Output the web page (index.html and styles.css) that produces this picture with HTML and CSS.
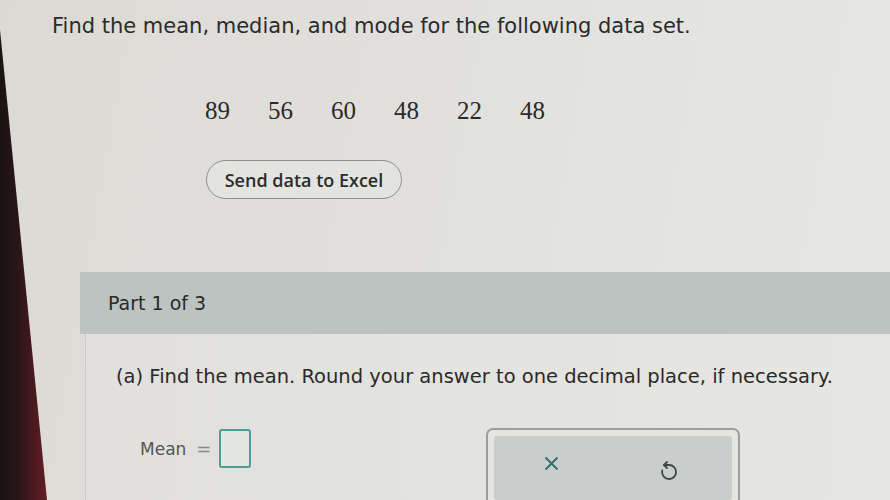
FILE: index.html
```html
<!DOCTYPE html>
<html>
<head>
<meta charset="utf-8">
<link rel="stylesheet" href="styles.css">
</head>
<body>
<div class="bezel"></div>
<main class="page">
  <h1 class="title">Find the mean, median, and mode for the following data set.</h1>
  <div class="data">
    <span>89</span><span>56</span><span>60</span><span>48</span><span>22</span><span>48</span>
  </div>
  <div class="excel-row">
    <button class="excel">Send data to Excel</button>
  </div>
  <section class="part">
    <div class="part-head">Part 1 of 3</div>
    <div class="part-body">
      <p class="question">(a) Find the mean. Round your answer to one decimal place, if necessary.</p>
      <div class="answer-row">
        <div class="mean">
          <span class="mean-label">Mean</span>
          <span class="eq">=</span>
          <span class="input"></span>
        </div>
        <div class="tools">
          <div class="tools-inner">
            <svg class="icon-x" width="15" height="15" viewBox="0 0 15 15"><path d="M1.5 1.5 L13.5 13.5 M13.5 1.5 L1.5 13.5" stroke="#336f66" stroke-width="1.8" fill="none"/></svg>
            <svg class="icon-undo" width="18" height="21" viewBox="0 0 18 21"><path d="M4 5 H9 A7 7 0 1 1 2.2 10.5" stroke="#3a4a47" stroke-width="1.8" fill="none" stroke-linecap="round"/><path d="M7 2 L4 5 L7 8" stroke="#3a4a47" stroke-width="1.8" fill="none" stroke-linecap="round" stroke-linejoin="round"/></svg>
          </div>
        </div>
      </div>
    </div>
  </section>
</main>
</body>
</html>
```

FILE: styles.css
```css
html, body {
  margin: 0;
  padding: 0;
  width: 890px;
  height: 500px;
  overflow: hidden;
}
body {
  position: relative;
  background: linear-gradient(100deg, #dcdad5 0%, #e1e0dc 45%, #e7e8e6 100%);
  font-family: "DejaVu Sans", Verdana, sans-serif;
  color: #2a2a2a;
}
.bezel {
  position: absolute;
  left: 0;
  top: 0;
  width: 60px;
  height: 500px;
  background: linear-gradient(90deg, #1a1414 0%, #2a1518 30%, #5a1c22 70%, #6a2228 100%);
  clip-path: polygon(0 30px, 47px 500px, 0 500px);
}
.page {
  padding: 14px 0 0 52px;
}
.title {
  margin: 0;
  font-size: 21px;
  font-weight: normal;
  line-height: 24px;
  color: #2b2b2b;
}
.data {
  display: flex;
  gap: 38px;
  margin: 58px 0 0 153px;
  font-family: "Liberation Serif", "Times New Roman", serif;
  font-size: 25px;
  line-height: 30px;
  color: #2a2a2a;
}
.excel-row {
  display: flex;
  margin: 34px 0 0 154px;
}
.excel {
  width: 196px;
  height: 39px;
  border: 1.5px solid #8e908d;
  border-radius: 20px;
  background: #e3e3df;
  font-family: "Open Sans", sans-serif;
  font-size: 18px;
  font-weight: 600;
  color: #2c2c2c;
  padding: 0;
}
.part {
  margin: 73px 0 0 28px;
}
.part-head {
  height: 62px;
  background: #bcc3c0;
  display: flex;
  align-items: center;
  padding-left: 28px;
  font-size: 19px;
  color: #2a2a2a;
  box-sizing: border-box;
}
.part-body {
  margin-left: 5px;
  border-left: 1px solid #c9c9c5;
  background: linear-gradient(90deg, #e1e0dc, #e6e6e3);
  height: 166px;
  padding-left: 30px;
  box-sizing: border-box;
}
.question {
  margin: 0;
  padding-top: 31px;
  font-size: 19.5px;
  line-height: 24px;
  color: #2a2a2a;
}
.answer-row {
  display: flex;
  align-items: flex-start;
  margin-top: 39px;
}
.mean {
  display: flex;
  align-items: center;
  margin-top: 1px;
  padding-left: 24px;
  width: 346px;
}
.mean-label {
  font-size: 17px;
  color: #555;
}
.eq {
  font-size: 18px;
  color: #888;
  margin: 0 8px 0 10px;
}
.input {
  width: 28px;
  height: 35px;
  border: 2px solid #4f9c94;
  border-radius: 3px;
  background: #e4e6e3;
}
.tools {
  width: 254px;
  height: 80px;
  border: 2px solid #9c9e9b;
  border-radius: 7px;
  background: #e5e5e1;
  padding: 6px;
  box-sizing: border-box;
}
.tools-inner {
  height: 100%;
  background: #c9cdcb;
  border-radius: 3px;
  display: flex;
  align-items: flex-start;
  padding-top: 20px;
  box-sizing: border-box;
}
.icon-x {
  margin-left: 50px;
}
.icon-undo {
  margin-left: 101px;
  margin-top: 4px;
}
```
